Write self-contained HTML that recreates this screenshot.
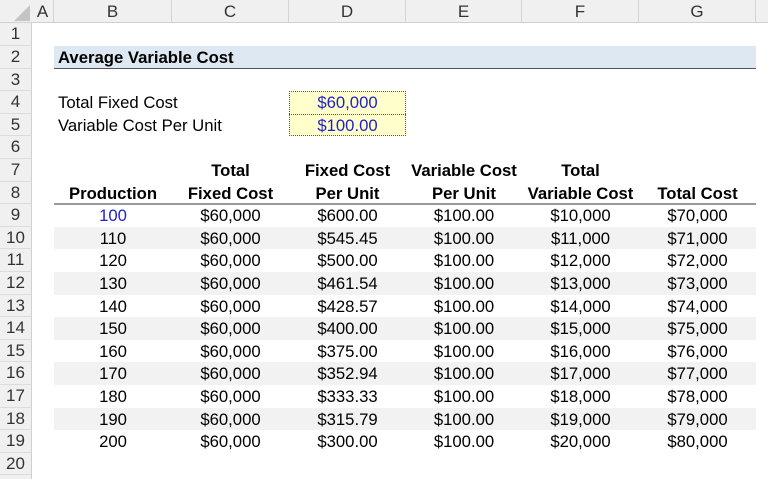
<!DOCTYPE html>
<html><head><style>
body{margin:0;width:768px;height:479px;overflow:hidden;background:#fff;font-family:"Liberation Sans",Arial,sans-serif;font-size:16.7px;color:#000;position:relative}
.hdr{position:absolute;left:0;top:0;width:768px;height:23px;background:#f0f0f0;border-bottom:1px solid #d0d0d0;box-sizing:border-box}
.hc{position:absolute;top:0;height:23px;line-height:23px;text-align:center;font-size:17px;color:#333;border-right:1px solid #d4d4d4;box-sizing:border-box}
.rn{position:absolute;left:0;width:32px;background:#f0f0f0;border-right:1px solid #d0d0d0;box-sizing:border-box;top:23px;height:456px}
.r{position:absolute;left:0;width:31px;height:22.6px;line-height:22.6px;text-align:center;font-size:17px;color:#333;border-bottom:1px solid #dcdcdc;box-sizing:border-box}
.c{position:absolute;height:22.6px;line-height:22.6px;padding-top:1px;text-align:center;white-space:nowrap;box-sizing:border-box}
.row{position:absolute;left:54px;width:702px;height:22.6px;line-height:22.6px;display:flex;white-space:nowrap}
.row span{display:block;text-align:center;padding-top:1px}
.row span:nth-child(1){width:118px}.row span:nth-child(2){width:117px}.row span:nth-child(3){width:117px}
.row span:nth-child(4){width:116px}.row span:nth-child(5){width:117px}.row span:nth-child(6){width:117px}
.b{font-weight:bold}
.g{background:#f2f2f2}
</style></head><body>
<div class="hdr"></div>
<svg style="position:absolute;left:14px;top:5px" width="16" height="16"><polygon points="16,0 16,16 0,16" fill="#c4c4c4"/></svg>
<div class="hc" style="left:32px;width:22px">A</div>
<div class="hc" style="left:54px;width:118px">B</div>
<div class="hc" style="left:172px;width:117px">C</div>
<div class="hc" style="left:289px;width:117px">D</div>
<div class="hc" style="left:406px;width:116px">E</div>
<div class="hc" style="left:522px;width:117px">F</div>
<div class="hc" style="left:639px;width:117px">G</div>
<div class="rn"></div>
<div class="r" style="top:23.4px">1</div>
<div class="r" style="top:46px">2</div>
<div class="r" style="top:68.6px">3</div>
<div class="r" style="top:91.2px">4</div>
<div class="r" style="top:113.8px">5</div>
<div class="r" style="top:136.4px">6</div>
<div class="r" style="top:159px">7</div>
<div class="r" style="top:181.6px">8</div>
<div class="r" style="top:204.2px">9</div>
<div class="r" style="top:226.8px">10</div>
<div class="r" style="top:249.4px">11</div>
<div class="r" style="top:272px">12</div>
<div class="r" style="top:294.6px">13</div>
<div class="r" style="top:317.2px">14</div>
<div class="r" style="top:339.8px">15</div>
<div class="r" style="top:362.4px">16</div>
<div class="r" style="top:385px">17</div>
<div class="r" style="top:407.6px">18</div>
<div class="r" style="top:430.2px">19</div>
<div class="r" style="top:452.8px">20</div>

<div style="position:absolute;left:54px;top:46px;width:702px;height:22.6px;background:#dde8f2;border-bottom:1.5px solid #555;box-sizing:border-box"></div>
<div class="c b" style="left:58px;top:46px;text-align:left">Average Variable Cost</div>
<div class="c" style="left:58px;top:91.2px;text-align:left">Total Fixed Cost</div>
<div class="c" style="left:58px;top:113.8px;text-align:left">Variable Cost Per Unit</div>
<div style="position:absolute;left:289px;top:91.2px;width:117px;height:45.2px;background:#ffffcc;border:1px dotted #555;box-sizing:border-box"></div>
<div style="position:absolute;left:289px;top:113.8px;width:117px;border-top:1px dotted #555"></div>
<div class="c" style="left:289px;width:117px;top:91.2px;color:#2222cc">$60,000</div>
<div class="c" style="left:289px;width:117px;top:113.8px;color:#2222cc">$100.00</div>

<div class="row b" style="top:159px"><span></span><span>Total</span><span>Fixed Cost</span><span>Variable Cost</span><span>Total</span><span></span></div>
<div class="row b" style="top:181.6px"><span>Production</span><span>Fixed Cost</span><span>Per Unit</span><span>Per Unit</span><span>Variable Cost</span><span>Total Cost</span></div>
<div style="position:absolute;left:54px;top:203px;width:702px;border-top:2px solid #999"></div>
<div class="row" style="top:204.2px"><span style="color:#2222cc">100</span><span>$60,000</span><span>$600.00</span><span>$100.00</span><span>$10,000</span><span>$70,000</span></div>
<div class="row g" style="top:226.8px"><span>110</span><span>$60,000</span><span>$545.45</span><span>$100.00</span><span>$11,000</span><span>$71,000</span></div>
<div class="row" style="top:249.4px"><span>120</span><span>$60,000</span><span>$500.00</span><span>$100.00</span><span>$12,000</span><span>$72,000</span></div>
<div class="row g" style="top:272px"><span>130</span><span>$60,000</span><span>$461.54</span><span>$100.00</span><span>$13,000</span><span>$73,000</span></div>
<div class="row" style="top:294.6px"><span>140</span><span>$60,000</span><span>$428.57</span><span>$100.00</span><span>$14,000</span><span>$74,000</span></div>
<div class="row g" style="top:317.2px"><span>150</span><span>$60,000</span><span>$400.00</span><span>$100.00</span><span>$15,000</span><span>$75,000</span></div>
<div class="row" style="top:339.8px"><span>160</span><span>$60,000</span><span>$375.00</span><span>$100.00</span><span>$16,000</span><span>$76,000</span></div>
<div class="row g" style="top:362.4px"><span>170</span><span>$60,000</span><span>$352.94</span><span>$100.00</span><span>$17,000</span><span>$77,000</span></div>
<div class="row" style="top:385px"><span>180</span><span>$60,000</span><span>$333.33</span><span>$100.00</span><span>$18,000</span><span>$78,000</span></div>
<div class="row g" style="top:407.6px"><span>190</span><span>$60,000</span><span>$315.79</span><span>$100.00</span><span>$19,000</span><span>$79,000</span></div>
<div class="row" style="top:430.2px"><span>200</span><span>$60,000</span><span>$300.00</span><span>$100.00</span><span>$20,000</span><span>$80,000</span></div>
</body></html>
